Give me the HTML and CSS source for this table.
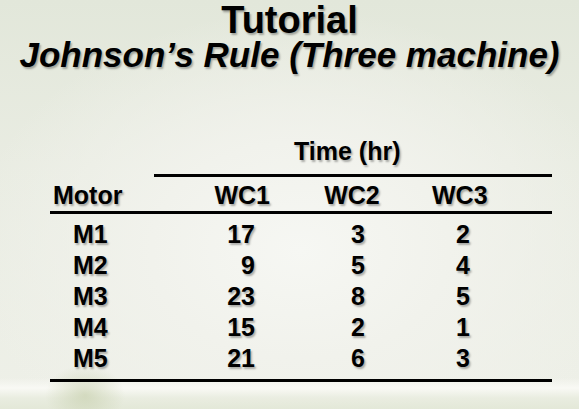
FILE: index.html
```html
<!DOCTYPE html>
<html>
<head>
<meta charset="utf-8">
<link rel="stylesheet" href="styles.css">
</head>
<body>
<div class="slide">
  <h1 class="title">Tutorial</h1>
  <h2 class="subtitle">Johnson’s Rule (Three machine)</h2>
  <div class="table">
    <div class="time-row"><div class="time">Time (hr)</div></div>
    <div class="head-row">
      <div class="c-motor-h">Motor</div>
      <div class="c-wc1-h">WC1</div>
      <div class="c-wc2-h">WC2</div>
      <div class="c-wc3-h">WC3</div>
    </div>
    <div class="body-rows">
      <div class="c-motor">M1</div><div class="c-wc1">17</div><div class="c-wc2">3</div><div class="c-wc3">2</div>
      <div class="c-motor">M2</div><div class="c-wc1">9</div><div class="c-wc2">5</div><div class="c-wc3">4</div>
      <div class="c-motor">M3</div><div class="c-wc1">23</div><div class="c-wc2">8</div><div class="c-wc3">5</div>
      <div class="c-motor">M4</div><div class="c-wc1">15</div><div class="c-wc2">2</div><div class="c-wc3">1</div>
      <div class="c-motor">M5</div><div class="c-wc1">21</div><div class="c-wc2">6</div><div class="c-wc3">3</div>
    </div>
  </div>
</div>
</body>
</html>
```

FILE: styles.css
```css
html, body {
  margin: 0;
  padding: 0;
}
body {
  width: 579px;
  height: 409px;
  overflow: hidden;
  font-family: "Liberation Sans", Arial, sans-serif;
  font-weight: bold;
  color: #000;
  background-color: #eef0e8;
  background-image:
    radial-gradient(ellipse 40px 30px at 85px 395px, rgba(190, 200, 160, 0.55), rgba(190, 200, 160, 0) 100%),
    linear-gradient(to bottom, rgba(255,255,255,0) 378px, rgba(250,250,246,0.9) 388px, rgba(232,236,222,0.8) 398px, rgba(226,231,214,0.9) 409px),
    radial-gradient(ellipse 330px 240px at 300px 250px, #f6f7f3 0%, #f1f2ec 45%, rgba(232,236,224,0) 100%),
    linear-gradient(to bottom, #e2e7da 0%, #e9ece2 40%, #eef0e8 100%);
}
.slide {
  width: 579px;
  height: 409px;
  text-shadow: 1.5px 1.5px 2px rgba(0, 0, 0, 0.3);
}
.title {
  margin: 0;
  padding-top: 2px;
  font-size: 38px;
  line-height: 36px;
  text-align: center;
  font-weight: bold;
}
.subtitle {
  margin: 0;
  font-size: 35px;
  line-height: 34px;
  text-align: center;
  font-style: italic;
  font-weight: bold;
}
.table {
  margin: 64px 0 0 50px;
  width: 502px;
  font-size: 25px;
  line-height: 31px;
}
.time-row {
  padding-left: 104px;
}
.time {
  padding-left: 140px;
  padding-bottom: 7px;
  border-bottom: 3px solid #000;
}
.head-row, .body-rows {
  display: grid;
  grid-template-columns: 104px 132px 132px 134px;
}
.head-row {
  padding-top: 3px;
  border-bottom: 3px solid #000;
}
.body-rows {
  padding: 5px 0;
  border-bottom: 3px solid #000;
}
.c-motor-h {
  padding-left: 3px;
}
.c-wc1-h {
  text-align: right;
  padding-right: 16px;
}
.c-wc2-h {
  text-align: center;
}
.c-wc3-h {
  padding-left: 14px;
}
.c-motor {
  padding-left: 23px;
}
.c-wc1 {
  text-align: right;
  padding-right: 31px;
}
.c-wc2 {
  text-align: center;
  padding-left: 12px;
}
.c-wc3 {
  padding-left: 38px;
}
```
